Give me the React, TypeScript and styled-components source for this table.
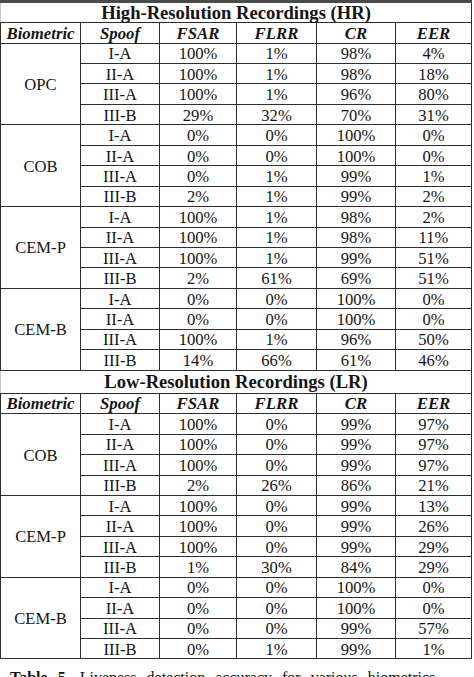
import styled, { createGlobalStyle } from "styled-components";

type Row = [string, string, string, string, string];

interface Group {
  name: string;
  rows: Row[];
}

interface Section {
  title: string;
  groups: Group[];
}

const sections: Section[] = [
  {
    title: "High-Resolution Recordings (HR)",
    groups: [
      {
        name: "OPC",
        rows: [
          ["I-A", "100%", "1%", "98%", "4%"],
          ["II-A", "100%", "1%", "98%", "18%"],
          ["III-A", "100%", "1%", "96%", "80%"],
          ["III-B", "29%", "32%", "70%", "31%"],
        ],
      },
      {
        name: "COB",
        rows: [
          ["I-A", "0%", "0%", "100%", "0%"],
          ["II-A", "0%", "0%", "100%", "0%"],
          ["III-A", "0%", "1%", "99%", "1%"],
          ["III-B", "2%", "1%", "99%", "2%"],
        ],
      },
      {
        name: "CEM-P",
        rows: [
          ["I-A", "100%", "1%", "98%", "2%"],
          ["II-A", "100%", "1%", "98%", "11%"],
          ["III-A", "100%", "1%", "99%", "51%"],
          ["III-B", "2%", "61%", "69%", "51%"],
        ],
      },
      {
        name: "CEM-B",
        rows: [
          ["I-A", "0%", "0%", "100%", "0%"],
          ["II-A", "0%", "0%", "100%", "0%"],
          ["III-A", "100%", "1%", "96%", "50%"],
          ["III-B", "14%", "66%", "61%", "46%"],
        ],
      },
    ],
  },
  {
    title: "Low-Resolution Recordings (LR)",
    groups: [
      {
        name: "COB",
        rows: [
          ["I-A", "100%", "0%", "99%", "97%"],
          ["II-A", "100%", "0%", "99%", "97%"],
          ["III-A", "100%", "0%", "99%", "97%"],
          ["III-B", "2%", "26%", "86%", "21%"],
        ],
      },
      {
        name: "CEM-P",
        rows: [
          ["I-A", "100%", "0%", "99%", "13%"],
          ["II-A", "100%", "0%", "99%", "26%"],
          ["III-A", "100%", "0%", "99%", "29%"],
          ["III-B", "1%", "30%", "84%", "29%"],
        ],
      },
      {
        name: "CEM-B",
        rows: [
          ["I-A", "0%", "0%", "100%", "0%"],
          ["II-A", "0%", "0%", "100%", "0%"],
          ["III-A", "0%", "0%", "99%", "57%"],
          ["III-B", "0%", "1%", "99%", "1%"],
        ],
      },
    ],
  },
];

const headers = ["Biometric", "Spoof", "FSAR", "FLRR", "CR", "EER"];
const colWidths = [80, 79, 77, 80, 79, 76];

const serif = `"Liberation Serif", "Times New Roman", serif`;

const GlobalStyle = createGlobalStyle`
  html, body {
    margin: 0;
    padding: 0;
    background: #ffffff;
  }
  body {
    font-family: ${serif};
    color: #141414;
  }
`;

const Page = styled.div`
  width: 474px;
  display: flex;
  flex-direction: column;
  font-family: ${serif};
`;

const Table = styled.table`
  width: 472px;
  border-collapse: collapse;
  table-layout: fixed;
  font-family: ${serif};
  color: #141414;
  border-top: 3px solid #4a4a4a;
  border-left: 1px solid #c8c8c8;
  border-right: 1px solid #2e2e2e;
`;

const TitleRow = styled.tr<{ $h: number }>`
  height: ${(p) => p.$h}px;
`;

const TitleCell = styled.th`
  font-family: ${serif};
  font-size: 18.6px;
  font-weight: bold;
  text-align: center;
  padding: 1px 0 0;
  line-height: 18px;
  border-bottom: 1px solid #2e2e2e;
  border-top: 1px solid #2e2e2e;
`;

const HeadRow = styled.tr`
  height: 20.6px;
`;

const HeadCell = styled.th`
  font-family: ${serif};
  font-size: 16.8px;
  font-weight: bold;
  font-style: italic;
  text-align: center;
  padding: 2px 0 0;
  line-height: 16px;
  border: 1px solid #2e2e2e;
`;

const DataRow = styled.tr`
  height: 20.45px;
`;

const Cell = styled.td`
  font-family: ${serif};
  font-size: 16.6px;
  font-weight: normal;
  text-align: center;
  vertical-align: middle;
  padding: 2px 0 0;
  line-height: 16px;
  border: 1px solid #2e2e2e;
`;

const Caption = styled.div`
  margin-top: 10px;
  padding-left: 10px;
  font-family: ${serif};
  font-size: 16px;
  line-height: 18px;
  color: #141414;
  white-space: nowrap;
  word-spacing: 6px;

  & b {
    font-weight: bold;
  }
`;

export default function App() {
  return (
    <Page>
      <GlobalStyle />
      <Table>
        <colgroup>
          {colWidths.map((w, i) => (
            <col key={i} style={{ width: w }} />
          ))}
        </colgroup>
        <tbody>
          {sections.map((section, si) => [
            <TitleRow key={`t${si}`} $h={si === 0 ? 20 : 23}>
              <TitleCell colSpan={6}>{section.title}</TitleCell>
            </TitleRow>,
            <HeadRow key={`h${si}`}>
              {headers.map((h) => (
                <HeadCell key={h}>{h}</HeadCell>
              ))}
            </HeadRow>,
            ...section.groups.flatMap((group, gi) =>
              group.rows.map((row, ri) => (
                <DataRow key={`r${si}-${gi}-${ri}`}>
                  {ri === 0 && <Cell rowSpan={group.rows.length}>{group.name}</Cell>}
                  {row.map((v, ci) => (
                    <Cell key={ci}>{v}</Cell>
                  ))}
                </DataRow>
              ))
            ),
          ])}
        </tbody>
      </Table>
      <Caption>
        <b>Table 5.</b> Liveness detection accuracy for various biometrics
      </Caption>
    </Page>
  );
}
